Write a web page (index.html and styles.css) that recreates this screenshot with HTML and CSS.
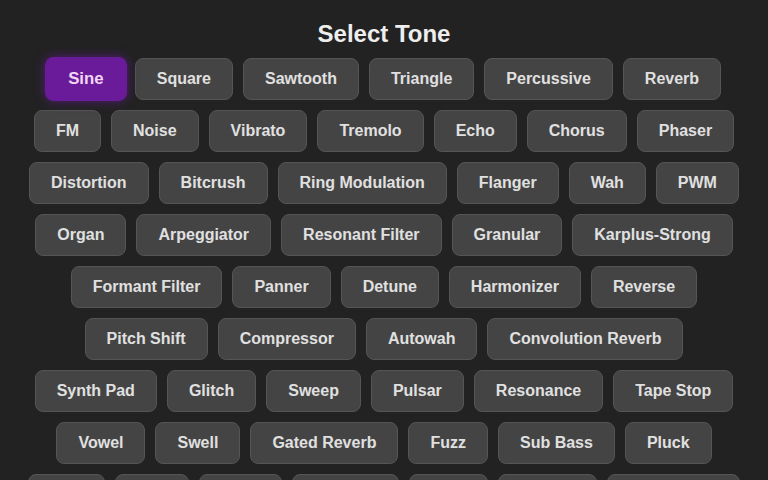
FILE: index.html
```html
<!DOCTYPE html>
<html lang="en">
<head>
<meta charset="utf-8">
<title>Select Tone</title>
<link rel="stylesheet" href="styles.css">
</head>
<body>
<main class="page">
  <h1 class="title">Select Tone</h1>
  <div class="tones">
    <button class="tone is-selected">Sine</button>
    <button class="tone">Square</button>
    <button class="tone">Sawtooth</button>
    <button class="tone">Triangle</button>
    <button class="tone">Percussive</button>
    <button class="tone">Reverb</button>
    <button class="tone">FM</button>
    <button class="tone">Noise</button>
    <button class="tone">Vibrato</button>
    <button class="tone">Tremolo</button>
    <button class="tone">Echo</button>
    <button class="tone">Chorus</button>
    <button class="tone">Phaser</button>
    <button class="tone">Distortion</button>
    <button class="tone">Bitcrush</button>
    <button class="tone">Ring Modulation</button>
    <button class="tone">Flanger</button>
    <button class="tone">Wah</button>
    <button class="tone">PWM</button>
    <button class="tone">Organ</button>
    <button class="tone">Arpeggiator</button>
    <button class="tone">Resonant Filter</button>
    <button class="tone">Granular</button>
    <button class="tone">Karplus-Strong</button>
    <button class="tone">Formant Filter</button>
    <button class="tone">Panner</button>
    <button class="tone">Detune</button>
    <button class="tone">Harmonizer</button>
    <button class="tone">Reverse</button>
    <button class="tone">Pitch Shift</button>
    <button class="tone">Compressor</button>
    <button class="tone">Autowah</button>
    <button class="tone">Convolution Reverb</button>
    <button class="tone">Synth Pad</button>
    <button class="tone">Glitch</button>
    <button class="tone">Sweep</button>
    <button class="tone">Pulsar</button>
    <button class="tone">Resonance</button>
    <button class="tone">Tape Stop</button>
    <button class="tone">Vowel</button>
    <button class="tone">Swell</button>
    <button class="tone">Gated Reverb</button>
    <button class="tone">Fuzz</button>
    <button class="tone">Sub Bass</button>
    <button class="tone">Pluck</button>
    <button class="tone">Kick</button>
    <button class="tone">Bell</button>
    <button class="tone">Lo-Fi</button>
    <button class="tone">Vocoder</button>
    <button class="tone">Hum</button>
    <button class="tone">Crystal</button>
    <button class="tone">Bit Reducer</button>
  </div>
</main>
</body>
</html>
```
FILE: styles.css
```css
html, body {
  margin: 0;
  background: #222222;
}

body {
  padding: 20px;
  font-family: "Liberation Sans", Arial, sans-serif;
  color: #e0e0e0;
}

.page {
  width: 722px;
  margin: 0 auto;
}

.title {
  margin: 0 0 10px;
  font-size: 24px;
  font-weight: 700;
  text-align: center;
  color: #eeeeee;
}

.tones {
  display: flex;
  flex-wrap: wrap;
  justify-content: center;
  gap: 10px;
}

.tone {
  font-family: "Liberation Sans", Arial, sans-serif;
  font-size: 16px;
  font-weight: 700;
  line-height: 18px;
  padding: 11px 21px;
  border: 1px solid #555555;
  border-radius: 8px;
  background: #444444;
  color: #e0e0e0;
  cursor: pointer;
}

.tone.is-selected {
  background: #6a1b9a;
  border-color: #6a1b9a;
  color: #f3d6f6;
  transform: scale(1.05);
  box-shadow: 0 0 10px rgba(106, 27, 154, 0.7);
}
```
